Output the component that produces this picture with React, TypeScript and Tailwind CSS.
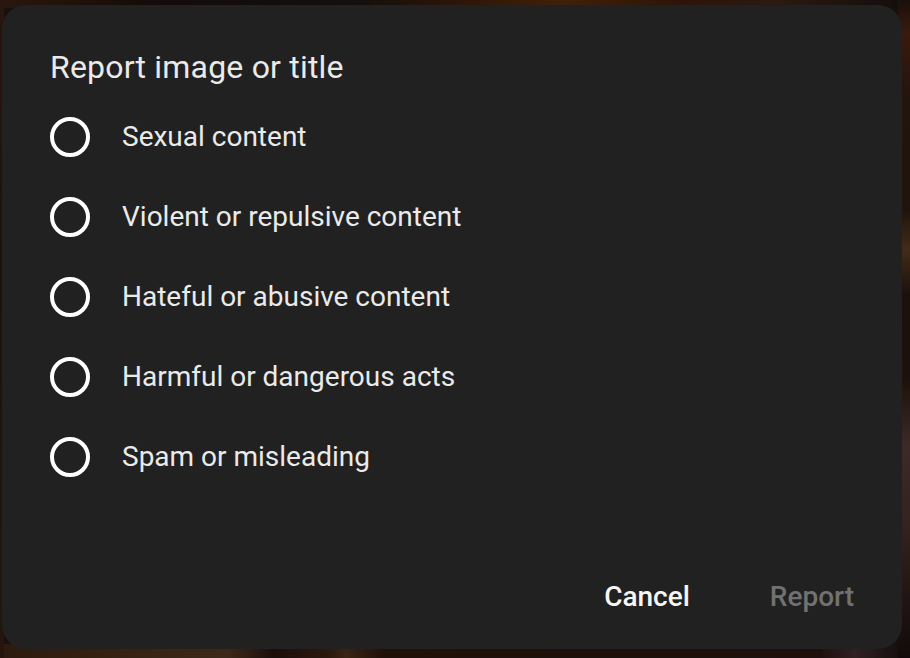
const reasons = [
  'Sexual content',
  'Violent or repulsive content',
  'Hateful or abusive content',
  'Harmful or dangerous acts',
  'Spam or misleading',
];

export default function App() {
  return (
    <div className="relative h-[658px] w-[910px] overflow-hidden bg-[#17100c] pt-[5px] pr-[8px] pb-[9px] pl-[2px] font-['Roboto',sans-serif]">
      {/* blurred artwork behind the dialog */}
      <div className="absolute inset-x-0 top-0 h-[8px] bg-[linear-gradient(90deg,#2a170d_0%,#120b08_18%,#15100c_40%,#2c1508_50%,#3f2109_62%,#2e1408_75%,#2a1a12_85%,#130d0b_100%)]" />
      <div className="absolute inset-x-0 bottom-0 h-[14px] bg-[linear-gradient(90deg,#2c1a10_0%,#33200f_10%,#3d2919_25%,#1a0e0a_30%,#2a180e_36%,#3a2412_38%,#1f110a_42%,#1c110b_70%,#1d100c_90%,#2f2022_94%,#100b0a_100%)]" />
      <div className="absolute inset-y-0 right-0 w-[12px] bg-[linear-gradient(180deg,#1a100c_0%,#3a1a0c_5%,#22140f_15%,#20140e_32%,#432b18_38%,#1a100c_45%,#1d130d_58%,#3d2a28_68%,#33221f_80%,#1a110e_95%,#100b0a_100%)]" />
      <div className="absolute inset-y-0 left-0 w-[4px] bg-[linear-gradient(180deg,#2a170d_0%,#1c110b_40%,#24160e_100%)]" />

      <div className="relative flex h-[644px] w-[900px] flex-col rounded-[24px] bg-[#212121]">
        <h2 className="pt-[44px] pl-[48px] text-[32px] leading-[36px] font-normal tracking-[0.2px] text-[#eaeaea]">
          Report image or title
        </h2>
        <div className="mt-[12px] flex flex-col">
          {reasons.map((reason) => (
            <div key={reason} className="flex h-[80px] items-center pl-[48px]">
              <span className="h-[40px] w-[40px] rounded-full border-[4px] border-white" />
              <span className="ml-[32px] text-[28px] leading-[40px] text-[#eaeaea]">{reason}</span>
            </div>
          ))}
        </div>
        <div className="mt-auto flex items-center justify-end gap-[80px] pr-[48px] pb-[32px]">
          <span className="text-[28px] leading-[40px] font-medium text-[#f6f6f6]">Cancel</span>
          <span className="text-[28px] leading-[40px] font-medium text-[#717171]">Report</span>
        </div>
      </div>
    </div>
  );
}
